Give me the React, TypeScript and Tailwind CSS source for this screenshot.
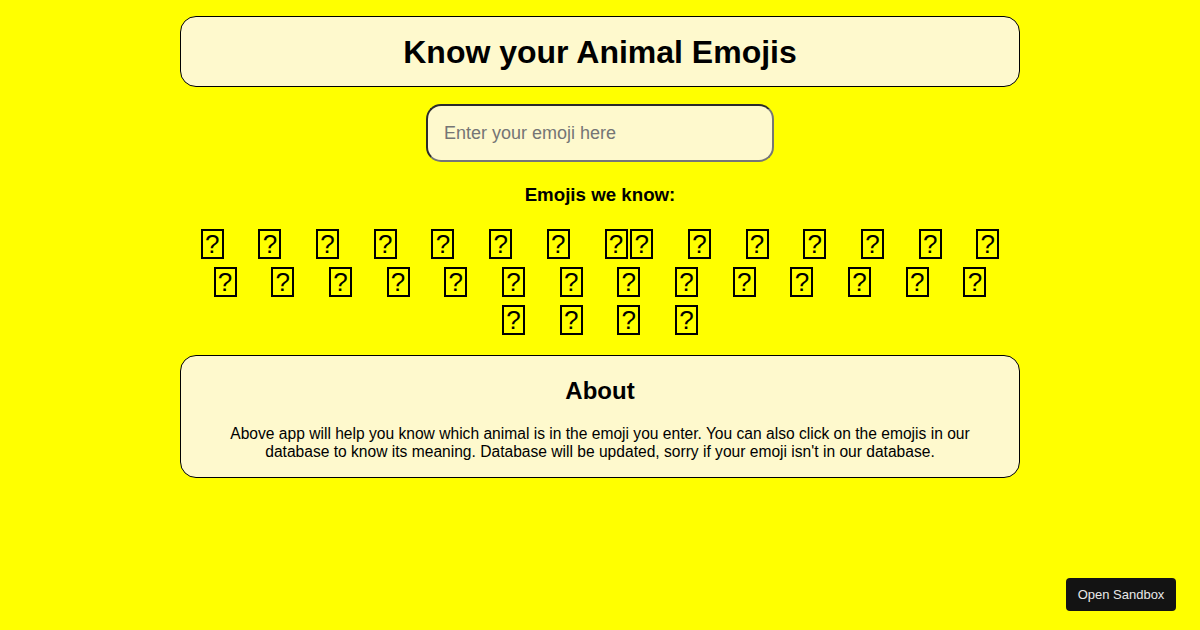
import React from "react";

const emojis: string[] = [
  "🐶", "🐱", "🐭", "🐹", "🐰", "🦊", "🐻", "🐕‍🦺", "🐼", "🐨", "🐯", "🦁", "🐮", "🐷",
  "🐸", "🐵", "🐔", "🐧", "🐦", "🐤", "🦆", "🦅", "🦉", "🦇", "🐺", "🐗", "🐴", "🦄",
  "🐝", "🐛", "🦋", "🐌",
];

function Tofu() {
  return (
    <span className="flex h-[38px] w-[25.7px] items-center justify-center pt-[2px]">
      <span
        className="flex h-[30px] w-[23px] items-center justify-center border-2 border-black text-[26px] leading-none"
        style={{ fontFamily: '"Liberation Sans", Arial, sans-serif' }}
      >
        ?
      </span>
    </span>
  );
}

export default function App() {
  return (
    <div
      className="min-h-[630px] w-full bg-[#ffff00] text-black"
      style={{ fontFamily: '"Liberation Sans", Arial, sans-serif' }}
    >
      <div className="flex flex-col items-center pt-4">
        <header className="w-[840px] rounded-[16px] border border-black bg-[#fef9cd] text-center">
          <h1 className="mt-[17px] mb-[15px] text-[32px] font-bold leading-[36.8px]">Know your Animal Emojis</h1>
        </header>

        <input
          className="mt-[17px] h-[58px] w-[348px] rounded-[15px] border-2 border-t-[#2b2b2b] border-l-[#2b2b2b] border-b-[#767676] border-r-[#767676] bg-[#fef9cd] px-4 pt-[2px] text-[18px] placeholder:text-[#757575] outline-none"
          style={{ fontFamily: '"Liberation Sans", Arial, sans-serif' }}
          placeholder="Enter your emoji here"
        />

        <h3 className="mt-[22px] mb-[19px] text-[18.72px] font-bold leading-[21.5px]">Emojis we know:</h3>

        <div className="flex w-[840px] flex-wrap justify-center">
          {emojis.map((e, i) => {
            const parts = e.split("\u200D").length;
            return (
              <span key={i} title={e} aria-label={e} className="flex cursor-pointer px-4">
                {Array.from({ length: parts }).map((_, j) => (
                  <Tofu key={j} />
                ))}
              </span>
            );
          })}
        </div>

        <section className="mt-[17px] w-[840px] rounded-[16px] border border-black bg-[#fef9cd] px-8 text-center">
          <h2 className="mt-[21px] mb-[20px] text-[24px] font-bold leading-[27.6px]">About</h2>
          <p className="mb-4 text-[15.6px] leading-[18px]">
            Above app will help you know which animal is in the emoji you enter. You can also click on the emojis in our
            database to know its meaning. Database will be updated, sorry if your emoji isn't in our database.
          </p>
        </section>
      </div>

      <button className="fixed bottom-[19px] right-[24px] h-[33px] w-[110px] rounded-[4px] bg-[#131313] text-[13px] text-[#e8e8e8]">
        Open Sandbox
      </button>
    </div>
  );
}
